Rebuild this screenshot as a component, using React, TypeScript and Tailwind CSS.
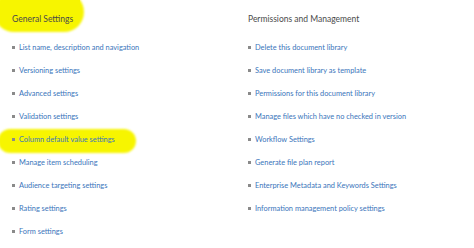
import React from "react"

const general = [
  "List name, description and navigation",
  "Versioning settings",
  "Advanced settings",
  "Validation settings",
  "Column default value settings",
  "Manage item scheduling",
  "Audience targeting settings",
  "Rating settings",
  "Form settings",
]

const permissions = [
  "Delete this document library",
  "Save document library as template",
  "Permissions for this document library",
  "Manage files which have no checked in version",
  "Workflow Settings",
  "Generate file plan report",
  "Enterprise Metadata and Keywords Settings",
  "Information management policy settings",
]

function LinkRow({ label }: { label: string }) {
  return (
    <li className="relative flex h-[23px] items-center">
      <span className="mr-[4px] h-[3px] w-[3px] bg-[#8a8a8a]" />
      <span className="text-[7.4px] leading-none text-[#3a75bb]">{label}</span>
    </li>
  )
}

function Section({ title, items }: { title: string; items: string[] }) {
  return (
    <div className="relative flex flex-col">
      <h2 className="relative flex h-[29px] items-end pb-[6px] text-[8.5px] leading-none text-[#4a4a4a]">{title}</h2>
      <ul className="mt-[7px] flex flex-col">
        {items.map((item) => (
          <LinkRow key={item} label={item} />
        ))}
      </ul>
    </div>
  )
}

export default function App() {
  return (
    <div
      className="relative h-[248px] w-[474px] overflow-hidden bg-white"
      style={{ fontFamily: 'Lato, "Open Sans", sans-serif' }}
    >
      {/* highlighter marks */}
      <div className="absolute left-[-6px] top-[-8px] h-[40px] w-[90px] rounded-[20px] bg-[#f7f500] blur-[1px]" />
      <div className="absolute left-[40px] top-[-8px] h-[22px] w-[40px] rounded-[8px] bg-[#f7f500]" />
      <div className="absolute left-[-2px] top-[129px] h-[24px] w-[138px] rounded-[14px] bg-[#f7f500] blur-[1px]" />

      <div className="relative grid grid-cols-[236px_1fr] pl-[12px]">
        <Section title="General Settings" items={general} />
        <Section title="Permissions and Management" items={permissions} />
      </div>
    </div>
  )
}
